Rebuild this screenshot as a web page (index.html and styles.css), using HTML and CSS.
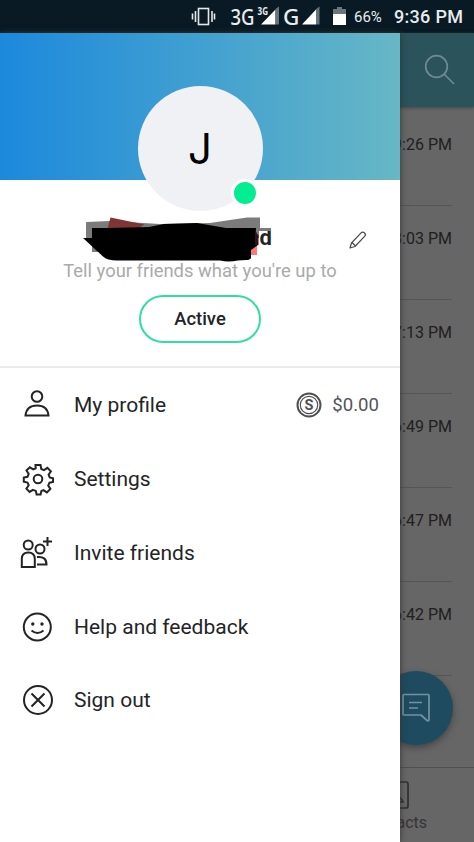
FILE: index.html
```html
<!DOCTYPE html>
<html lang="en">
<head>
<meta charset="utf-8">
<title>Profile menu</title>
<link rel="stylesheet" href="styles.css">
</head>
<body>
<div class="phone">
  <header class="status">
    <svg class="signals" width="184" height="33" viewBox="190 0 184 33">
      <g fill="none" stroke="#e3e8ea" stroke-width="1.6"><rect x="198.500" y="8.500" width="10" height="16"/><path d="M195.500 11v11M192.500 13.500v6M212 11v11M214.500 13.500v6"/></g>
      <path d="M261 24.500l14.500-15v15zM302 24.500l14-15v15z" fill="#fff"/>
      <path d="M275.500 9l3.500-2.500v18h-3.500zM316 9l3.500-2.500v18H316z" fill="#66757d"/>
      <path d="M337 7h5v2h4v5h-13V9h4z" fill="#69767d"/><path d="M333 14h13v11h-13z" fill="#fff"/>
      <g class="net"><text x="230.500" y="25" textLength="24" lengthAdjust="spacingAndGlyphs">3G</text><text class="net-small" x="257.500" y="14.500" textLength="10.500" lengthAdjust="spacingAndGlyphs">3G</text><text x="283" y="25">G</text></g>
    </svg>
    <span class="battery">66%</span>
    <span class="clock">9:36 PM</span>
  </header>
  <div class="screen">
    <main class="chats">
      <div class="toolbar">
        <svg width="32" height="32" viewBox="0 0 32 32" fill="none" stroke="#708b90" stroke-width="1.700"><circle cx="12.500" cy="12.500" r="10.800"/><path d="M20 20l10 10"/></svg>
      </div>
      <div class="list">
        <div class="row">9:26 PM</div>
        <div class="row">8:03 PM</div>
        <div class="row">7:13 PM</div>
        <div class="row">6:49 PM</div>
        <div class="row">6:47 PM</div>
        <div class="row">6:42 PM</div>
      </div>
      <div class="tabs">
        <div class="tab">
          <svg width="28" height="28" viewBox="0 0 28 28" fill="none" stroke="#303030" stroke-width="1.700"><rect x="1" y="1" width="26" height="26" rx="2"/><circle cx="14" cy="10" r="4"/><path d="M6 21c2-7 14-7 16 0z"/></svg>
          <span>Contacts</span>
        </div>
      </div>
      <div class="fab">
        <svg width="30" height="30" viewBox="0 0 30 30" fill="none" stroke="#7293a1" stroke-width="1.700" stroke-linejoin="round"><path d="M3 1.500h24q1 0 1 1V26q0 3-2.500 1l-5.500-5H3q-1 0-1-1V2.500q0-1 1-1z"/><path d="M8 9.500h13M8 15h9"/></svg>
      </div>
    </main>
    <aside class="drawer">
      <div class="cover">
        <div class="avatar">J<i class="presence"></i></div>
      </div>
      <div class="identity">
        <div class="name-row">
          <div class="name">d
            <svg class="scribble" width="196" height="50" viewBox="80 215 196 50">
              <path d="M86 222l24-1 50 3 50-1 37-5.500h13v10.500h11v3h-12v7h-7v14H92v-14h-6z" fill="#7b7b7b"/>
              <path d="M110.500 217.500l34 7-7 4h-30z" fill="#7f3435"/>
              <path d="M247 232l10 4v19h-9z" fill="#ff7777"/>
              <path d="M83 238h9v-10h17l40-1 15-3 33-1 29 5h30v8l2 2v7l-7 5v8q-1 2-5 2l-8 .500q-10 2-18 0H117q-10 0-14-4z" fill="#000"/>
              <path d="M255 229l2 5 1.500 1v10H255z" fill="#30101a"/>
            </svg>
          </div>
          <svg class="pencil" width="18" height="18" viewBox="0 0 18 18" fill="none" stroke="#4b4b4f" stroke-width="1.200" stroke-linejoin="round"><path d="M1 17l1.500-5L12.300 1.700q1.500-1.200 3.200.3t.3 3.200L6 15.500zM3 11.500l3.500 3.500"/></svg>
        </div>
        <div class="mood">Tell your friends what you're up to</div>
        <div class="active">Active</div>
      </div>
      <nav class="menu">
        <div class="item">
          <svg width="34" height="34" viewBox="0 0 34 34"><circle cx="16" cy="8.500" r="5.300"/><path d="M4.500 27.500q1-10 11.500-10t11.500 10z"/></svg>
          <span class="label">My profile</span>
          <span class="credit"><svg class="coin" width="26" height="26" viewBox="0 0 26 26"><circle cx="13" cy="13" r="11.500"/><circle class="thin" cx="13" cy="13" r="8.700"/><text x="13" y="18.200" text-anchor="middle">S</text></svg><span class="amount">$0.00</span></span>
        </div>
        <div class="item">
          <svg width="34" height="34" viewBox="-17 -17 34 34"><circle r="4.300"/><path d="M-2.500-14h5l.8 4 2.700 1.100 3.400-2.300 3.500 3.500-2.300 3.400 1.100 2.700 3.300.8v3.700l-3.500.8-1.300 2.900 2.200 3.300-3.500 3.500-3.400-2.300-2.100.9-.8 3.400h-4l-.8-3.500-2.900-1.100-3.300 2.100-3.200-3.300 2.300-3.400-1.200-2.700-3.700-.8v-4.100l3.700-.8 1.200-2.900-2.200-3.400 3.300-3.200 3.400 2.100 2.500-1.100z"/></svg>
          <span class="label">Settings</span>
        </div>
        <div class="item">
          <svg width="34" height="34" viewBox="0 0 34 34"><circle cx="7.200" cy="9" r="4.500"/><circle cx="19" cy="13" r="4.500"/><path d="M.8 31V23q0-6.500 6.500-6.500t6.500 6.500v8zM16 21q9.500-1 9.500 7.500H16M26.500 1v9M22 5.500h9"/></svg>
          <span class="label">Invite friends</span>
        </div>
        <div class="item">
          <svg width="34" height="34" viewBox="0 0 34 34"><circle cx="16.300" cy="17" r="13.500"/><path d="M10.500 20.500q6 5 12 0"/><circle class="dot" cx="11.800" cy="14" r="1.700"/><circle class="dot" cx="21" cy="14" r="1.700"/></svg>
          <span class="label">Help and feedback</span>
        </div>
        <div class="item">
          <svg width="34" height="34" viewBox="0 0 34 34"><circle cx="17" cy="17" r="14"/><path d="M10.500 10.500l13 13M23.500 10.500l-13 13"/></svg>
          <span class="label">Sign out</span>
        </div>
      </nav>
    </aside>
  </div>
</div>
</body>
</html>
```
FILE: styles.css
```css
* { box-sizing: border-box; }
body { margin: 0; font-family: Roboto, "Liberation Sans", sans-serif; color: #242427; }
svg { display: block; flex: none; overflow: visible; }
.phone { width: 474px; height: 842px; display: flex; flex-direction: column; overflow: hidden; }
.status { height: 33px; background: #091a24; color: #e8ecee; display: flex; align-items: center; justify-content: flex-end; padding-right: 11px; flex: none; white-space: nowrap; }
.signals { margin-right: -20px; }
.net { fill: #e8ecee; font: 500 22.5px "Noto Sans", sans-serif; }
.net-small { font-size: 10px; font-weight: 700; }
.battery { font-size: 15px; width: 28px; margin-right: 12px; }
.clock { font-size: 18px; font-weight: 500; width: 69px; letter-spacing: 0.3px; }
.screen { position: relative; flex: 1; min-height: 0; }
.chats { height: 100%; background: #666; display: flex; flex-direction: column; }
.toolbar { height: 74px; flex: none; background: #2a535b; display: flex; justify-content: flex-end; padding: 21px 18px 0 0; box-shadow: 0 1px 3px #444; }
.list { flex: 1; padding: 5px 22px 0; }
.row { height: 94px; border-bottom: 1px solid #555; padding-top: 22px; line-height: 22px; font-size: 16px; text-align: right; color: #202020; }
.tabs { height: 75px; border-top: 1px solid #505050; display: flex; justify-content: flex-end; padding: 13px 47px 0 0; color: #353535; font-size: 16px; }
.tab { display: flex; flex-direction: column; align-items: center; gap: 4px; }
.fab { position: absolute; left: 379px; top: 638px; width: 74px; height: 74px; border-radius: 50%; background: #1e4b60; box-shadow: 0 3px 7px #444; display: flex; align-items: center; justify-content: center; }
.drawer { position: absolute; left: 0; top: 0; bottom: 0; width: 400px; background: #fff; box-shadow: 0 0 6px #333; }
.cover { height: 147px; background: linear-gradient(90deg, #1c89dc, #67b7c5); display: flex; justify-content: center; padding-top: 53px; }
.avatar { position: relative; width: 125px; height: 125px; flex: none; border-radius: 50%; background: #eff1f4; color: #000; display: flex; align-items: center; justify-content: center; font: 42px Inter, sans-serif; }
.presence { position: absolute; left: 93px; top: 93px; width: 28px; height: 28px; border: 3px solid #fff; border-radius: 50%; background: #00ed91; }
.identity { height: 188px; border-bottom: 2px solid #ebebeb; display: flex; flex-direction: column; align-items: center; padding-top: 43px; }
.name-row { width: 100%; height: 30px; display: flex; align-items: center; justify-content: space-between; padding-right: 33px; }
.name { position: relative; width: 272px; font-size: 22px; font-weight: 700; text-align: right; line-height: 28px; }
.scribble { position: absolute; left: 80px; top: -9px; z-index: -1; }
.name { z-index: 0; }
.scribble { z-index: 0; }
.pencil { margin-top: 4px; }
.mood { height: 30px; line-height: 35px; font-size: 18.4px; color: #aaa; white-space: nowrap; }
.active { width: 122px; height: 48px; margin-top: 12px; border: 2px solid #31dea0; border-radius: 24px; text-align: center; line-height: 44px; font-size: 18.4px; font-weight: 500; }
.menu { padding-top: 0.6px; }
.item { height: 73.7px; display: flex; align-items: center; padding: 0 21px; }
.item svg { fill: none; stroke: #242427; stroke-width: 2; }
.item .dot { fill: #242427; stroke: none; }
.label { margin-left: 19px; font-size: 21px; white-space: nowrap; }
.credit { margin-left: auto; display: flex; align-items: center; gap: 10px; font-size: 18.6px; color: #55555a; }
.item .coin { stroke: #505054; stroke-width: 2; }
.item .coin .thin { stroke-width: 1.2; }
.item .coin text { fill: #505054; stroke: none; font-size: 14.5px; font-weight: 700; }
```
